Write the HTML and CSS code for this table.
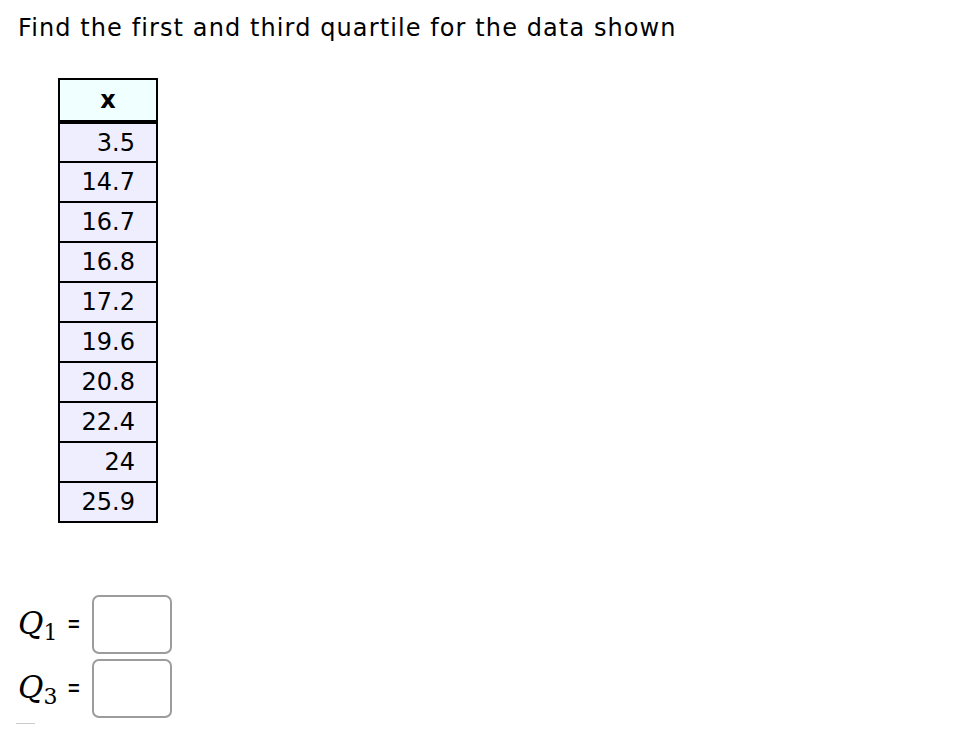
FILE: index.html
```html
<!DOCTYPE html>
<html>
<head>
<meta charset="utf-8">
<link rel="stylesheet" href="styles.css">
</head>
<body>
<p class="prompt">Find the first and third quartile for the data shown</p>
<table class="data">
  <thead><tr><th>x</th></tr></thead>
  <tbody>
    <tr><td>3.5</td></tr>
    <tr><td>14.7</td></tr>
    <tr><td>16.7</td></tr>
    <tr><td>16.8</td></tr>
    <tr><td>17.2</td></tr>
    <tr><td>19.6</td></tr>
    <tr><td>20.8</td></tr>
    <tr><td>22.4</td></tr>
    <tr><td>24</td></tr>
    <tr><td>25.9</td></tr>
  </tbody>
</table>
<div class="answers">
  <div class="answer"><span class="q">Q<sub>1</sub></span><span class="eq">=</span><span class="box"></span></div>
  <div class="answer"><span class="q">Q<sub>3</sub></span><span class="eq">=</span><span class="box"></span></div>
  <div class="rule"></div>
</div>
</body>
</html>
```
FILE: styles.css
```css
body {
  margin: 0;
  background: #fff;
  font-family: "DejaVu Sans", sans-serif;
  color: #000;
}
.prompt {
  margin: 0;
  padding: 12px 0 0 18px;
  font-size: 24px;
  line-height: 32px;
  letter-spacing: 1.1px;
}
.data {
  margin: 34px 0 0 58px;
  border-collapse: collapse;
  font-size: 24px;
}
.data th, .data td {
  width: 98px;
  border: 2px solid #000;
  box-sizing: border-box;
}
.data th {
  height: 43px;
  background: #f0ffff;
  font-weight: bold;
  text-align: center;
  border-bottom-width: 4px;
  padding: 0;
}
.data td {
  height: 40px;
  background: #eeeeff;
  text-align: right;
  padding: 0 21px 0 0;
}
.answers {
  margin: 72px 0 0 16px;
  display: flex;
  flex-direction: column;
  gap: 5px;
}
.answer {
  display: flex;
  align-items: center;
  height: 59px;
}
.q {
  font-family: "DejaVu Serif", "Liberation Serif", serif;
  font-style: italic;
  font-size: 31px;
  width: 52px;
  padding-left: 2px;
  box-sizing: border-box;
}
.q sub {
  font-style: normal;
  font-size: 22px;
  vertical-align: -6px;
}
.eq {
  font-family: "Liberation Sans", sans-serif;
  font-weight: bold;
  font-size: 20px;
  width: 24px;
}
.box {
  width: 80px;
  height: 59px;
  box-sizing: border-box;
  border: 2px solid #9c9c9c;
  border-radius: 7px;
}
.rule {
  width: 19px;
  height: 1px;
  background: #ccc;
}
```
